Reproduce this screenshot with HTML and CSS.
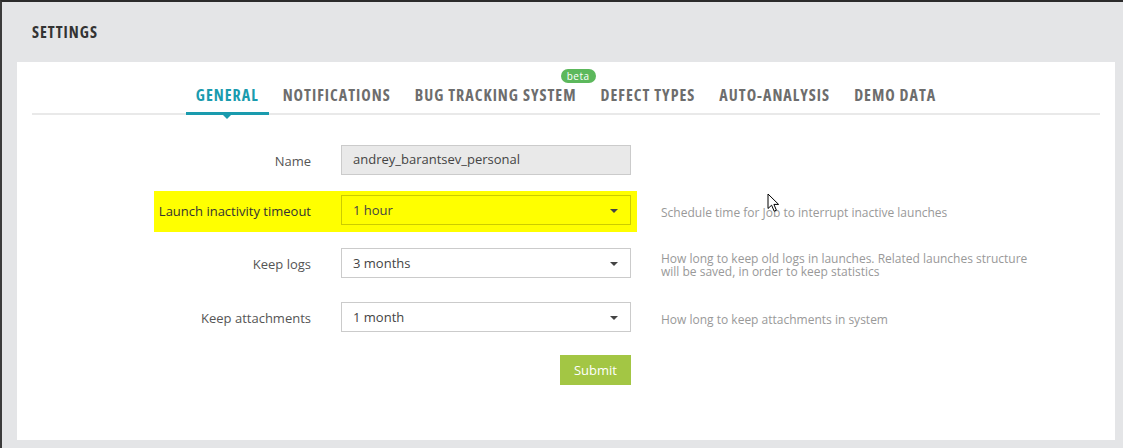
FILE: index.html
```html
<!DOCTYPE html>
<html>
<head>
  <meta charset="utf-8">
  <link rel="stylesheet" href="styles.css">
  <title>Settings</title>
</head>
<body>
  <div class="page-header">Settings</div>
  <div class="card">
    <div class="tabs">
      <div class="tab active">General</div>
      <div class="tab">Notifications</div>
      <div class="tab">Bug tracking system<span class="badge">beta</span></div>
      <div class="tab">Defect types</div>
      <div class="tab">Auto-analysis</div>
      <div class="tab">Demo data</div>
    </div>
    <form class="settings-form">
      <div class="form-row row-name">
        <label class="label">Name</label>
        <div class="field input-readonly">andrey_barantsev_personal</div>
      </div>
      <div class="form-row highlight">
        <label class="label">Launch inactivity timeout</label>
        <div class="field select">1 hour<span class="caret"></span></div>
        <div class="help">Schedule time for Job to interrupt inactive launches</div>
      </div>
      <div class="form-row row-logs">
        <label class="label">Keep logs</label>
        <div class="field select">3 months<span class="caret"></span></div>
        <div class="help">How long to keep old logs in launches. Related launches structure will be saved, in order to keep statistics</div>
      </div>
      <div class="form-row">
        <label class="label">Keep attachments</label>
        <div class="field select">1 month<span class="caret"></span></div>
        <div class="help">How long to keep attachments in system</div>
      </div>
      <div class="form-row">
        <div class="label"></div>
        <div class="actions"><button type="button" class="submit">Submit</button></div>
      </div>
    </form>
  </div>
  <svg class="cursor" width="14" height="20" viewBox="0 0 14 20">
    <path d="M1 1 L1 15.5 L4.6 12.2 L7.2 18.2 L9.4 17.2 L6.9 11.4 L11.6 11.4 Z" fill="#fff" stroke="#000" stroke-width="1" stroke-linejoin="round"/>
  </svg>
</body>
</html>
```

FILE: styles.css
```css
html, body {
  margin: 0;
  height: 448px;
  overflow: hidden;
}
body {
  background-color: #e4e5e7;
  border-top: 2px solid #2b2b2b;
  border-left: 2px solid #3b3b3b;
  box-sizing: border-box;
  font-family: "Open Sans", "DejaVu Sans", sans-serif;
  color: #555;
  position: relative;
}
.page-header {
  font-family: "Open Sans", "DejaVu Sans Condensed", sans-serif;
  font-stretch: 75%;
  font-weight: 700;
  font-size: 16px;
  letter-spacing: 1px;
  text-transform: uppercase;
  color: #333;
  padding: 19px 0 0 30px;
  height: 41px;
}
.card {
  background-color: #fff;
  margin-left: 15px;
  width: 1098px;
  height: 378px;
  box-sizing: border-box;
  padding: 0 15px;
}
.tabs {
  display: flex;
  justify-content: center;
  gap: 4px;
  border-bottom: 2px solid #e9e9e9;
  padding-top: 22px;
}
.tab {
  position: relative;
  font-family: "Open Sans", "DejaVu Sans Condensed", sans-serif;
  font-stretch: 75%;
  font-weight: 700;
  font-size: 16px;
  letter-spacing: 1px;
  text-transform: uppercase;
  color: #6d6d6d;
  padding: 0 10px;
  height: 29px;
  line-height: 22px;
  margin-bottom: -2px;
  border-bottom: 2px solid transparent;
}
.tab.active {
  color: #1a9bae;
  border-bottom: 3px solid #1a9bae;
  height: 28px;
}
.tab.active::after {
  content: "";
  position: absolute;
  left: 50%;
  bottom: -7px;
  margin-left: -4px;
  border-left: 4px solid transparent;
  border-right: 4px solid transparent;
  border-top: 4px solid #1a9bae;
}
.badge {
  position: absolute;
  top: -15px;
  right: -9px;
  background-color: #5cb85c;
  color: #fff;
  font-family: "Open Sans", sans-serif;
  font-stretch: 100%;
  font-weight: 400;
  font-size: 10px;
  letter-spacing: 0.5px;
  text-transform: none;
  line-height: 14px;
  height: 14px;
  padding: 0 6px;
  border-radius: 7px;
}
.settings-form {
  padding-top: 30px;
}
.form-row {
  display: flex;
  align-items: center;
  margin-bottom: 23px;
  position: relative;
  isolation: isolate;
}
.form-row.row-name {
  margin-bottom: 20px;
}
.form-row.row-logs {
  margin-bottom: 24px;
}
.label {
  width: 279px;
  flex: none;
  text-align: right;
  font-size: 13px;
  color: #555;
  padding-top: 2px;
}
.field {
  flex: none;
  width: 290px;
  height: 30px;
  box-sizing: border-box;
  margin-left: 30px;
  border: 1px solid #cbcbcb;
  padding: 0 11px;
  font-size: 13px;
  line-height: 28px;
  color: #444;
  position: relative;
}
.input-readonly {
  background-color: #e9e9e9;
  line-height: 26px;
}
.select {
  background-color: #fff;
}
.caret {
  position: absolute;
  right: 12px;
  top: 13px;
  border-left: 4px solid transparent;
  border-right: 4px solid transparent;
  border-top: 4px solid #444;
}
.help {
  margin-left: 30px;
  max-width: 372px;
  font-size: 12px;
  line-height: 13px;
  color: #999;
  padding-top: 4px;
}
.highlight::before {
  content: "";
  position: absolute;
  z-index: -1;
  left: 122px;
  width: 483px;
  top: -4px;
  bottom: -7px;
  background-color: #ffff00;
}
.highlight .select {
  background-color: transparent;
  border-color: #cccc00;
}
.highlight .label {
  color: #333;
}
.actions {
  width: 290px;
  margin-left: 30px;
  display: flex;
  justify-content: flex-end;
}
.submit {
  background-color: #a3c644;
  color: #fff;
  border: none;
  width: 71px;
  height: 30px;
  font-family: "Open Sans", sans-serif;
  font-size: 13px;
  padding: 0;
  cursor: pointer;
}
.cursor {
  position: absolute;
  left: 765px;
  top: 191px;
}
```
